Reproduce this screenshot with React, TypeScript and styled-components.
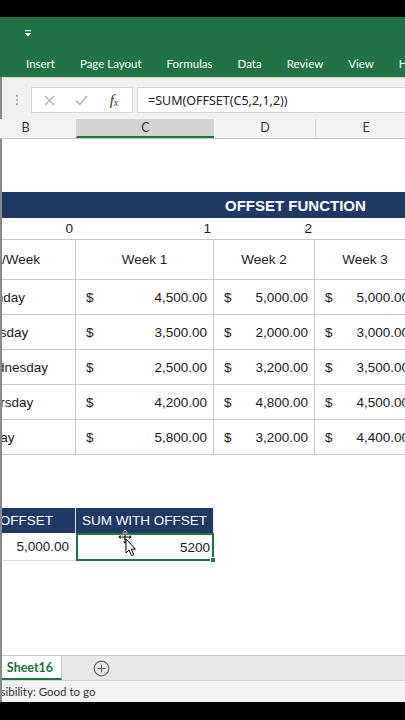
import React from 'react'
import styled, { createGlobalStyle } from 'styled-components'

const GREEN = '#217346'
const NAVY = '#1f3864'
const GRID = '#c9c9c9'
const UI_FONT = "'Lato', 'Noto Sans', sans-serif"
const CELL_FONT = "'Liberation Sans', Arial, sans-serif"

const days = ['Monday', 'Tuesday', 'Wednesday', 'Thursday', 'Friday']
const sales = [
  [4500, 5000, 5000],
  [3500, 2000, 3000],
  [2500, 3200, 3500],
  [4200, 4800, 4500],
  [5800, 3200, 4400],
]
const ribbonTabs = ['Insert', 'Page Layout', 'Formulas', 'Data', 'Review', 'View', 'Help']

const money = (n: number) =>
  n.toLocaleString('en-US', { minimumFractionDigits: 2, maximumFractionDigits: 2 })

const GlobalStyle = createGlobalStyle`
  html, body {
    margin: 0;
    padding: 0;
    background: #000;
  }
  * {
    box-sizing: border-box;
  }
`

const Screen = styled.div`
  width: 405px;
  height: 720px;
  display: flex;
  flex-direction: column;
  background: #000;
  overflow: hidden;
`

const Letterbox = styled.div<{ $h: number }>`
  flex: none;
  height: ${(p) => p.$h}px;
  background: #000;
`

const Ribbon = styled.div`
  flex: none;
  height: 60px;
  display: flex;
  flex-direction: column;
  background: ${GREEN};
`

const QuickBar = styled.div`
  height: 32px;
  display: flex;
  align-items: center;
  padding-left: 24px;
`

const TabRow = styled.div`
  flex: 1;
  display: flex;
  align-items: center;
  gap: 25px;
  padding-left: 26px;
  font-family: ${UI_FONT};
  font-size: 11.5px;
  color: #fff;
  white-space: nowrap;
`

const Body = styled.div`
  flex: 1;
  min-height: 0;
  display: flex;
  flex-direction: column;
  border-left: 2px solid #8a8a8a;
  background: #fff;
`

const FormulaBar = styled.div`
  flex: none;
  height: 42px;
  display: flex;
  align-items: flex-start;
  padding-top: 9px;
  border-top: 1px solid #d4d4d4;
  background: #f1f1f1;
`

const Grip = styled.div`
  width: 29px;
  height: 26px;
  display: flex;
  flex-direction: column;
  align-items: center;
  justify-content: center;
  gap: 2px;
  span {
    width: 2px;
    height: 2px;
    background: #b4b4b4;
  }
`

const ButtonBox = styled.div`
  width: 102px;
  height: 26px;
  display: flex;
  align-items: center;
  background: #fff;
  border: 1px solid #d6d6d6;
`

const BoxSlot = styled.div<{ $w: number }>`
  width: ${(p) => p.$w}px;
  display: flex;
  justify-content: center;
  align-items: center;
`

const Fx = styled.span`
  font-family: 'Liberation Serif', serif;
  font-style: italic;
  font-size: 15px;
  color: #333;
  sub {
    font-size: 10px;
    vertical-align: -1px;
  }
`

const FormulaInput = styled.div`
  flex: 1;
  height: 26px;
  margin-left: 4px;
  display: flex;
  align-items: center;
  padding-left: 10px;
  background: #fff;
  border: 1px solid #d6d6d6;
  border-right: none;
  font-family: 'Noto Sans', sans-serif;
  font-size: 12.5px;
  color: #222;
  white-space: nowrap;
`

const ColumnHeaders = styled.div`
  flex: none;
  height: 20px;
  display: grid;
  grid-template-columns: 102px 138px 101px 101px;
  margin-left: -28px;
  width: max-content;
  background: #f3f3f3;
  border-bottom: 1px solid #c3c3c3;
`

const ColumnLabel = styled.div<{ $selected?: boolean; $divider?: boolean }>`
  display: flex;
  align-items: center;
  justify-content: center;
  font-family: ${UI_FONT};
  font-size: 12.5px;
  color: #333;
  background: ${(p) => (p.$selected ? '#d3d3d3' : 'transparent')};
  border-bottom: 2px solid ${(p) => (p.$selected ? GREEN : 'transparent')};
  border-left: 1px solid ${(p) => (p.$divider ? '#d2d2d2' : 'transparent')};
`

const SheetArea = styled.div`
  flex: 1;
  min-height: 0;
  overflow: hidden;
  background: #fff;
  font-family: ${CELL_FONT};
  font-size: 13.5px;
  color: #1a1a1a;
`

const Gap = styled.div<{ $h: number }>`
  height: ${(p) => p.$h}px;
`

const Table = styled.div<{ $rows: string }>`
  display: grid;
  grid-template-columns: 132px 138px 101px 101px;
  grid-template-rows: ${(p) => p.$rows};
  margin-left: -58px;
  width: max-content;
`

const Banner = styled.div`
  grid-column: 1 / -1;
  display: flex;
  align-items: center;
  padding-left: 281px;
  background: ${NAVY};
  color: #fff;
  font-weight: bold;
  font-size: 15px;
  white-space: nowrap;
`

const IndexCell = styled.div`
  display: flex;
  align-items: center;
  justify-content: flex-end;
  padding-right: 3px;
  border-bottom: 1px solid ${GRID};
`

const Cell = styled.div<{ $justify?: string; $pl?: number; $pr?: number }>`
  display: flex;
  align-items: center;
  justify-content: ${(p) => p.$justify ?? 'flex-start'};
  padding: 0 ${(p) => p.$pr ?? 0}px 0 ${(p) => p.$pl ?? 0}px;
  border-right: 1px solid ${GRID};
  border-bottom: 1px solid ${GRID};
  white-space: nowrap;
  overflow: hidden;
`

const Money = styled(Cell)`
  justify-content: space-between;
  padding: 0 6px 0 10px;
`

const NavyHead = styled.div<{ $justify?: string; $pr?: number }>`
  display: flex;
  align-items: center;
  justify-content: ${(p) => p.$justify ?? 'center'};
  padding-right: ${(p) => p.$pr ?? 0}px;
  background: ${NAVY};
  color: #fff;
  border-right: 1px solid #dfe3ea;
  white-space: nowrap;
  overflow: hidden;
`

const PlainValue = styled.div`
  display: flex;
  align-items: center;
  justify-content: flex-end;
  padding-right: 7px;
  border-bottom: 1px solid #dadada;
`

const SelectedCell = styled.div`
  position: relative;
  display: flex;
  align-items: center;
  justify-content: flex-end;
  padding-right: 2px;
  border: 2px solid ${GREEN};
`

const FillHandle = styled.span`
  position: absolute;
  right: -4px;
  bottom: -4px;
  width: 6px;
  height: 6px;
  background: ${GREEN};
  border: 1px solid #fff;
`

const Cursor = styled.svg`
  position: absolute;
  left: 39px;
  top: -6px;
`

const TabBar = styled.div`
  flex: none;
  height: 25px;
  display: flex;
  align-items: stretch;
  background: #e8e8e8;
  border-top: 1px solid #c8c8c8;
`

const SheetTab = styled.div`
  width: 60px;
  display: flex;
  align-items: center;
  justify-content: center;
  padding-right: 3px;
  background: #fff;
  border-right: 1px solid #c8c8c8;
  border-bottom: 2px solid ${GREEN};
  font-family: ${UI_FONT};
  font-weight: bold;
  font-size: 12.5px;
  color: ${GREEN};
`

const AddSheet = styled.div`
  margin-left: 31px;
  display: flex;
  align-items: center;
`

const StatusBar = styled.div`
  flex: none;
  height: 22px;
  display: flex;
  align-items: center;
  overflow: hidden;
  background: #f3f3f3;
  border-top: 1px solid #d6d6d6;
  font-family: ${UI_FONT};
  font-size: 11.5px;
  color: #333;
  white-space: nowrap;
  span {
    margin-left: -31px;
  }
`

const QatIcon = () => (
  <svg width="8" height="9" viewBox="0 0 8 9">
    <rect x="1" y="1" width="6" height="1.2" fill="#fff" />
    <path d="M1 4 L7 4 L4 7.5 Z" fill="#fff" />
  </svg>
)

const CancelIcon = () => (
  <svg width="11" height="11" viewBox="0 0 11 11">
    <path d="M1 1 L10 10 M10 1 L1 10" stroke="#b2b2b2" strokeWidth="1.2" />
  </svg>
)

const EnterIcon = () => (
  <svg width="13" height="11" viewBox="0 0 13 11">
    <path d="M1 5.5 L4.8 9.5 L12 1" stroke="#b2b2b2" strokeWidth="1.3" fill="none" />
  </svg>
)

const PlusCircle = () => (
  <svg width="17" height="17" viewBox="0 0 17 17">
    <circle cx="8.5" cy="8.5" r="7.3" stroke="#6a6a6a" strokeWidth="1.2" fill="none" />
    <path d="M8.5 4.5 V12.5 M4.5 8.5 H12.5" stroke="#6a6a6a" strokeWidth="1.2" />
  </svg>
)

const MoveCursor = () => (
  <Cursor width="22" height="30" viewBox="0 0 22 30">
    <g stroke="#fff" strokeWidth="2.4" strokeLinecap="round">
      <path d="M2 8 H14 M8 2 V14" />
    </g>
    <g stroke="#000" strokeWidth="1.1">
      <path d="M2.5 8 H13.5 M8 2.5 V13.5" />
    </g>
    <g fill="#000" stroke="#fff" strokeWidth="0.6">
      <path d="M1 8 L4 5.5 L4 10.5 Z" />
      <path d="M15 8 L12 5.5 L12 10.5 Z" />
      <path d="M8 1 L5.5 4 L10.5 4 Z" />
      <path d="M8 15 L5.5 12 L10.5 12 Z" />
    </g>
    <path
      d="M9 10 L9 24 L12 21 L14.6 26.6 L16.8 25.6 L14.3 20.2 L18.4 20.2 Z"
      fill="#fff"
      stroke="#000"
      strokeWidth="1"
      strokeLinejoin="round"
    />
  </Cursor>
)

const App = () => {
  return (
    <Screen>
      <GlobalStyle />
      <Letterbox $h={17} />
      <Ribbon>
        <QuickBar>
          <QatIcon />
        </QuickBar>
        <TabRow>
          {ribbonTabs.map((tab) => (
            <span key={tab}>{tab}</span>
          ))}
        </TabRow>
      </Ribbon>
      <Body>
        <FormulaBar>
          <Grip>
            <span />
            <span />
            <span />
          </Grip>
          <ButtonBox>
            <BoxSlot $w={34}>
              <CancelIcon />
            </BoxSlot>
            <BoxSlot $w={30}>
              <EnterIcon />
            </BoxSlot>
            <BoxSlot $w={36}>
              <Fx>
                f<sub>x</sub>
              </Fx>
            </BoxSlot>
          </ButtonBox>
          <FormulaInput>=SUM(OFFSET(C5,2,1,2))</FormulaInput>
        </FormulaBar>
        <ColumnHeaders>
          <ColumnLabel>B</ColumnLabel>
          <ColumnLabel $selected>C</ColumnLabel>
          <ColumnLabel>D</ColumnLabel>
          <ColumnLabel $divider>E</ColumnLabel>
        </ColumnHeaders>
        <SheetArea>
          <Gap $h={53} />
          <Table $rows="26px 22px 40px repeat(5, 35px)">
            <Banner>OFFSET FUNCTION</Banner>
            <IndexCell>0</IndexCell>
            <IndexCell>1</IndexCell>
            <IndexCell>2</IndexCell>
            <IndexCell />
            <Cell $justify="flex-end" $pr={35}>
              Day/Week
            </Cell>
            <Cell $justify="center">Week 1</Cell>
            <Cell $justify="center">Week 2</Cell>
            <Cell $justify="center">Week 3</Cell>
            {days.map((day, i) => (
              <React.Fragment key={day}>
                <Cell $pl={33}>{day}</Cell>
                {sales[i].map((value, j) => (
                  <Money key={j}>
                    <span>$</span>
                    <span>{money(value)}</span>
                  </Money>
                ))}
              </React.Fragment>
            ))}
          </Table>
          <Gap $h={53} />
          <Table $rows="25px 28px">
            <NavyHead $justify="flex-end" $pr={22}>
              OFFSET
            </NavyHead>
            <NavyHead>SUM WITH OFFSET</NavyHead>
            <div />
            <div />
            <PlainValue>{money(5000)}</PlainValue>
            <SelectedCell>
              5200
              <FillHandle />
              <MoveCursor />
            </SelectedCell>
            <div />
            <div />
          </Table>
        </SheetArea>
        <TabBar>
          <SheetTab>Sheet16</SheetTab>
          <AddSheet>
            <PlusCircle />
          </AddSheet>
        </TabBar>
        <StatusBar>
          <span>Accessibility: Good to go</span>
        </StatusBar>
      </Body>
      <Letterbox $h={18} />
    </Screen>
  )
}

export default App
